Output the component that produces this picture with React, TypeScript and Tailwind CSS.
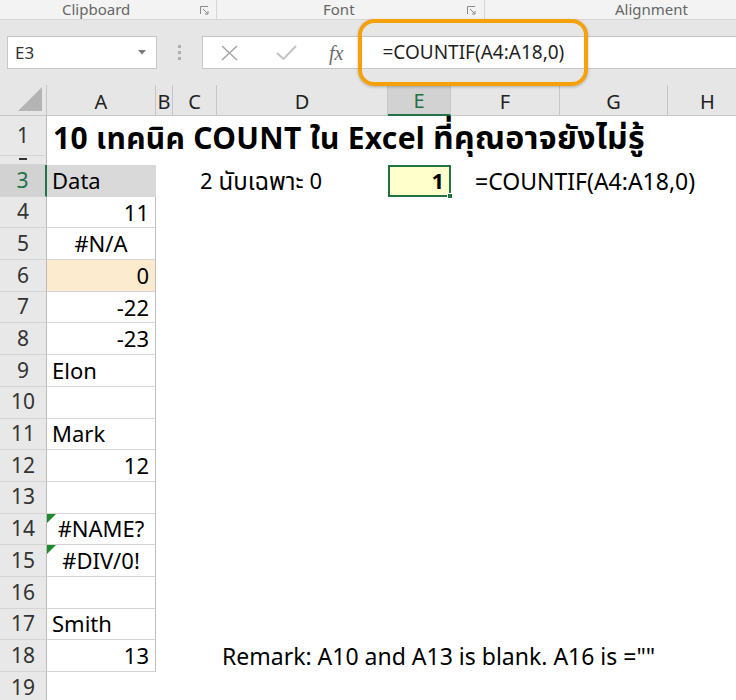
import React from "react";

const font = { fontFamily: '"Noto Sans", "Noto Sans Thai", "Leelawadee UI", Tahoma, sans-serif' };

type Cell = { v: string; align: "l" | "r" | "c"; fill?: string; tri?: boolean };

const colA: Record<number, Cell> = {
  4: { v: "11", align: "r" },
  5: { v: "#N/A", align: "c" },
  6: { v: "0", align: "r", fill: "bg-[#fcebcf]" },
  7: { v: "-22", align: "r" },
  8: { v: "-23", align: "r" },
  9: { v: "Elon", align: "l" },
  10: { v: "", align: "l" },
  11: { v: "Mark", align: "l" },
  12: { v: "12", align: "r" },
  13: { v: "", align: "l" },
  14: { v: "#NAME?", align: "c", tri: true },
  15: { v: "#DIV/0!", align: "c", tri: true },
  16: { v: "", align: "l" },
  17: { v: "Smith", align: "l" },
  18: { v: "13", align: "r" },
};

const alignCls = { l: "justify-start pl-[5px]", r: "justify-end pr-[6px]", c: "justify-center" };

function RowHeader({ n, active }: { n: number; active?: boolean }) {
  return (
    <div
      className={
        "flex h-full w-[47px] shrink-0 items-center justify-center border-b border-[#d4d4d4] text-[21px] " +
        (active
          ? "border-r-2 border-r-[#217346] bg-[#d2d2d2] text-[#217346]"
          : "border-r border-r-[#b9b9b9] bg-[#e8e8e8] text-[#333]")
      }
    >
      {n}
    </div>
  );
}

function Ribbon() {
  return (
    <div className="flex h-[20px] border-b border-[#d6d6d6] bg-[#f3f3f3] text-[15px] leading-[16px] text-[#666]">
      <div className="relative h-full w-[217px] border-r border-[#d6d6d6] pl-[62px] pt-[1px]">
        <span>Clipboard</span>
        <Launcher className="absolute right-[7px] top-[6px]" />
      </div>
      <div className="relative h-full w-[268px] border-r border-[#d6d6d6] pl-[106px] pt-[1px]">
        <span>Font</span>
        <Launcher className="absolute right-[8px] top-[6px]" />
      </div>
      <div className="h-full flex-1 pl-[130px] pt-[1px]">
        <span>Alignment</span>
      </div>
    </div>
  );
}

function Launcher({ className }: { className: string }) {
  return (
    <svg width="9" height="9" viewBox="0 0 9 9" className={className} fill="none" stroke="#8a8a8a" strokeWidth="1">
      <path d="M0.5 8 V0.5 H8" />
      <path d="M3 3 L8 8 M5 8 H8 V5" />
    </svg>
  );
}

function FormulaBar() {
  return (
    <div className="flex h-[65px] items-center bg-[#e6e6e6] pl-[7px]">
      <div className="flex h-[33px] w-[150px] items-center justify-between border border-[#c6c6c6] bg-white pl-[7px] pr-[10px] text-[17px] text-[#333]">
        <span>E3</span>
        <svg width="8" height="5" viewBox="0 0 8 5">
          <path d="M0 0 H8 L4 4.5 Z" fill="#7a7a7a" />
        </svg>
      </div>
      <div className="flex w-[45px] flex-col items-center gap-[3px]">
        <span className="h-[3px] w-[3px] bg-[#b0b0b0]" />
        <span className="h-[3px] w-[3px] bg-[#b0b0b0]" />
        <span className="h-[3px] w-[3px] bg-[#b0b0b0]" />
      </div>
      <div className="flex h-[33px] flex-1 items-center border border-r-0 border-[#c6c6c6] bg-white">
        <svg width="17" height="16" viewBox="0 0 17 16" className="ml-[18px]" stroke="#a6a6a6" strokeWidth="1.6">
          <path d="M1 1 L16 15 M16 1 L1 15" />
        </svg>
        <svg width="21" height="15" viewBox="0 0 21 15" className="ml-[38px]" fill="none" stroke="#c4c4c4" strokeWidth="2">
          <path d="M1 8 L7.5 14 L20 1" />
        </svg>
        <span className="ml-[32px] text-[20px] italic text-[#6a6a6a]" style={{ fontFamily: '"Liberation Serif", serif' }}>
          fx
        </span>
        <span className="ml-[39px] text-[19px] text-[#1f1f1f]">=COUNTIF(A4:A18,0)</span>
      </div>
    </div>
  );
}

function ColumnHeaders() {
  const cols: { k: string; cls: string; active?: boolean }[] = [
    { k: "A", cls: "w-[109px]" },
    { k: "B", cls: "w-[17px]" },
    { k: "C", cls: "w-[44px]" },
    { k: "D", cls: "w-[171px]" },
    { k: "E", cls: "w-[63px]", active: true },
    { k: "F", cls: "w-[109px]" },
    { k: "G", cls: "w-[108px]" },
    { k: "H", cls: "w-[80px]" },
  ];
  return (
    <div className="flex h-[31px] bg-[#e6e6e6]">
      <div className="relative w-[47px] shrink-0 border-b border-r border-[#c6c6c6]">
        <svg width="26" height="26" viewBox="0 0 26 26" className="absolute bottom-[3px] right-[3px]">
          <path d="M25 1 V25 H1 Z" fill="#b4b4b4" />
        </svg>
      </div>
      {cols.map((c) => (
        <div
          key={c.k}
          className={
            "flex shrink-0 items-center justify-center pt-[3px] text-[20px] " +
            c.cls +
            (c.active
              ? " border-b-2 border-r border-b-[#217346] border-r-[#c6c6c6] bg-[#d2d2d2] text-[#217346]"
              : " border-b border-r border-[#c6c6c6] text-[#222]")
          }
        >
          {c.k}
        </div>
      ))}
    </div>
  );
}

export default function App() {
  const rows = Array.from({ length: 16 }, (_, i) => i + 4);
  return (
    <div className="relative h-[700px] w-[736px] overflow-hidden bg-white text-black" style={font}>
      <Ribbon />
      <FormulaBar />
      <ColumnHeaders />

      {/* row 1: title */}
      <div className="flex h-[40px]">
        <RowHeader n={1} />
        <div className="flex items-center whitespace-nowrap pl-[6px] pt-[2px] text-[30px] font-bold tracking-[0.3px]">
          10 เทคนิค COUNT ใน Excel <span className="ml-[8px] text-[32px]">ที่คุณอาจยังไม่รู้</span>
        </div>
      </div>

      {/* row 2: nearly hidden */}
      <div className="flex h-[9px]">
        <div className="flex h-full w-[47px] shrink-0 justify-center overflow-hidden border-b border-r border-b-[#d4d4d4] border-r-[#b9b9b9] bg-[#e8e8e8]">
          <span className="mt-[2px] h-[2px] w-[8px] bg-[#333]" />
        </div>
      </div>

      {/* row 3 */}
      <div className="flex h-[31.7px]">
        <RowHeader n={3} active />
        <div className="flex w-[109px] shrink-0 items-center bg-[#d9d9d9] pl-[5px] text-[22px]">Data</div>
        <div className="w-[17px] shrink-0" />
        <div className="flex w-[44px] shrink-0 items-center overflow-visible whitespace-nowrap pl-[27px] text-[22px]">
          2 <span className="ml-[6px] text-[24px]">นับเฉพาะ</span>&nbsp;0
        </div>
        <div className="w-[171px] shrink-0" />
        <div className="relative flex w-[63px] shrink-0 items-center justify-end border-2 border-[#217346] bg-[#ffffcc] pr-[5px] text-[22px] font-bold">
          1
          <span className="absolute -bottom-[4px] -right-[4px] h-[6px] w-[6px] border border-white bg-[#217346]" />
        </div>
        <div className="flex items-center whitespace-nowrap pl-[24px] text-[23px]">=COUNTIF(A4:A18,0)</div>
      </div>

      {rows.map((n) => {
        const c = colA[n];
        return (
          <div key={n} className="flex h-[31.7px]">
            <RowHeader n={n} />
            {c ? (
              <div
                className={
                  "relative flex w-[109px] shrink-0 items-center border-b border-r border-b-[#d4d4d4] border-r-[#bfbfbf] text-[22px] " +
                  alignCls[c.align] +
                  " " +
                  (c.fill ?? "")
                }
              >
                {c.tri && (
                  <svg width="9" height="9" viewBox="0 0 9 9" className="absolute left-0 top-0">
                    <path d="M0 0 H9 L0 9 Z" fill="#1e8a2e" />
                  </svg>
                )}
                {c.v}
              </div>
            ) : (
              <div className="w-[109px] shrink-0" />
            )}
            {n === 18 && (
              <div className="flex items-center whitespace-nowrap pl-[66px] text-[23px]">
                Remark: A10 and A13 is blank. A16 is =""
              </div>
            )}
          </div>
        );
      })}

      {/* highlight around the formula */}
      <div className="absolute left-[358px] top-[19px] h-[67px] w-[230px] rounded-[16px] border-4 border-[#f4a10c] shadow-[0_1px_3px_rgba(0,0,0,0.25)]" />
    </div>
  );
}
